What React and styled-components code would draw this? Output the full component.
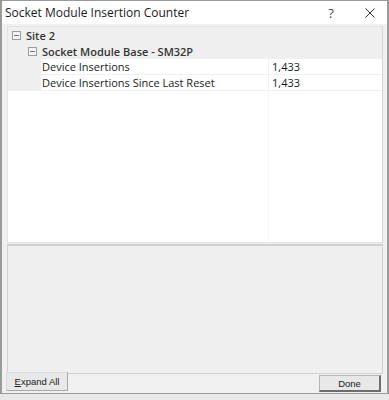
import React, { useState } from 'react';
import styled, { createGlobalStyle } from 'styled-components';

const GlobalStyle = createGlobalStyle`
    body {
        margin: 0;
        background: #e8e8e8;
        font-family: "Open Sans", "Noto Sans", "Liberation Sans", sans-serif;
    }
`;

const Window = styled.div`
    width: 389px;
    height: 394px;
    box-sizing: border-box;
    border: 1px solid #9a9a9a;
    border-left-width: 2px;
    border-right-width: 2px;
    background: #f0f0f0;
    display: flex;
    flex-direction: column;
`;

const TitleBar = styled.div`
    height: 23px;
    background: #ffffff;
    display: flex;
    align-items: center;
    padding-left: 3px;
    font-size: 12px;
    color: #1a1a1a;
    .title {
        flex: 1;
    }
    .help {
        width: 20px;
        margin-right: 24px;
        text-align: center;
        font-size: 13px;
        color: #444;
    }
    .close {
        width: 10px;
        height: 10px;
        margin-right: 12px;
    }
`;

const Body = styled.div`
    flex: 1;
    display: flex;
    flex-direction: column;
    padding: 2px 4px 0 5px;
`;

const Tree = styled.div`
    height: 215px;
    background: #ffffff;
    border: 1px solid #e2e2e2;
    border-right-color: #d6d6d6;
    display: grid;
    grid-template-columns: 261px 1fr;
    grid-template-rows: 16px 16px 16px 16px 1fr;
    font-size: 11px;
    color: #1a1a1a;
`;

const GroupRow = styled.div`
    grid-column: 1 / 3;
    background: #efefef;
    display: flex;
    align-items: center;
    padding-left: ${p => p.indent}px;
    padding-top: 1px;
    font-weight: 600;
    color: #353535;
    gap: 5px;
`;

const MinusBox = styled.span`
    width: 7px;
    height: 7px;
    border: 1px solid #9c9c9c;
    background: #f4f4f4;
    position: relative;
    &::after {
        content: '';
        position: absolute;
        left: 1px;
        right: 1px;
        top: 3px;
        height: 1px;
        background: #777;
    }
`;

const Cell = styled.div`
    display: flex;
    align-items: center;
    border-bottom: 1px solid #f0f0f0;
    border-right: ${p => (p.first ? '1px solid #f0f0f0' : 'none')};
    margin-left: ${p => (p.first ? '33px' : '0')};
    padding-left: ${p => (p.first ? '1px' : '3px')};
    box-shadow: ${p => (p.first ? '-33px 0 0 #efefef' : 'none')};
`;

const Filler = styled.div`
    border-right: ${p => (p.first ? '1px solid #f8f8f8' : 'none')};
`;

const Details = styled.div`
    height: 127px;
    margin-top: 1px;
    background: #efefef;
    border: 1px solid #cfcfcf;
    border-top: 2px solid #d0d0d0;
`;

const Footer = styled.div`
    display: flex;
    justify-content: space-between;
    align-items: flex-start;
`;

const Button = styled.button`
    font-family: "Liberation Sans", Arial, sans-serif;
    font-size: 9.5px;
    color: #1a1a1a;
    width: 62px;
    height: ${p => (p.primary ? '17px' : '19px')};
    margin-top: ${p => (p.primary ? '1px' : '-2px')};
    margin-left: ${p => (p.primary ? '0' : '-1px')};
    margin-right: ${p => (p.primary ? '2px' : '0')};
    background: #e8e8e8;
    border-style: solid;
    border-width: ${p => (p.primary ? '1px 2px 2px 1px' : '1px')};
    border-color: ${p => (p.primary ? '#b5b5b5 #6d6d6d #6d6d6d #b5b5b5' : '#dadada #a8a8a8 #a8a8a8 #dadada')};
    padding: 0;
    .u {
        text-decoration: underline;
    }
`;

const rows = [
    { label: 'Device Insertions', value: '1,433' },
    { label: 'Device Insertions Since Last Reset', value: '1,433' },
];

function App() {
    const [expanded] = useState(true);

    return (
        <>
            <GlobalStyle />
            <Window>
                <TitleBar>
                    <span className="title">Socket Module Insertion Counter</span>
                    <span className="help">?</span>
                    <svg className="close" viewBox="0 0 10 10">
                        <path d="M0.5 0.5 L9.5 9.5 M9.5 0.5 L0.5 9.5" stroke="#333" strokeWidth="1" fill="none" />
                    </svg>
                </TitleBar>
                <Body>
                    <Tree>
                        <GroupRow indent={4}>
                            <MinusBox />
                            Site 2
                        </GroupRow>
                        <GroupRow indent={20}>
                            <MinusBox />
                            Socket Module Base - SM32P
                        </GroupRow>
                        {expanded &&
                            rows.map(r => (
                                <React.Fragment key={r.label}>
                                    <Cell first>{r.label}</Cell>
                                    <Cell>{r.value}</Cell>
                                </React.Fragment>
                            ))}
                        <Filler first />
                        <Filler />
                    </Tree>
                    <Details />
                    <Footer>
                        <Button>
                            <span className="u">E</span>xpand All
                        </Button>
                        <Button primary>Done</Button>
                    </Footer>
                </Body>
            </Window>
        </>
    );
}

export default App;
